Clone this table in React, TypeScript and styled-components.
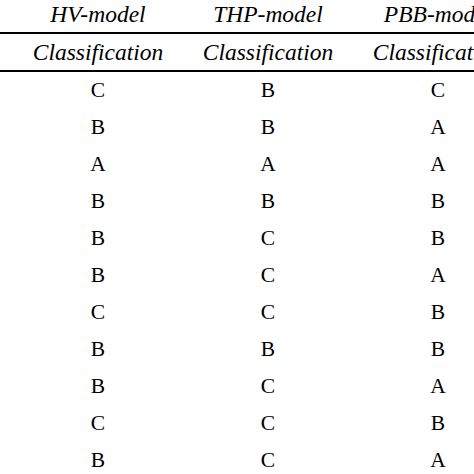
import React from 'react';
import styled, { createGlobalStyle } from 'styled-components';

const GlobalStyle = createGlobalStyle`
  html, body {
    margin: 0;
    padding: 0;
    background: #fff;
  }
  body {
    font-family: "Liberation Serif", "Times New Roman", serif;
    color: #000;
  }
`;

const Frame = styled.div`
  width: 474px;
  height: 474px;
  overflow: hidden;
`;

const Row = styled.div<{ $rule?: boolean; $h: number }>`
  display: grid;
  grid-template-columns: 13px repeat(3, 170px);
  width: 600px;
  height: ${({ $h }) => $h}px;
  box-sizing: border-box;
  border-bottom: ${({ $rule }) => ($rule ? '2px solid #000' : 'none')};
`;

const HeadCell = styled.div<{ $lh: number }>`
  font-style: italic;
  font-size: 23.5px;
  line-height: ${({ $lh }) => $lh}px;
  text-align: center;
  white-space: nowrap;
`;

const Cell = styled.div`
  font-size: 21.5px;
  line-height: 37px;
  text-align: center;
`;

const models = ['HV-model', 'THP-model', 'PBB-model'];

const rows = [
  ['C', 'B', 'C'],
  ['B', 'B', 'A'],
  ['A', 'A', 'A'],
  ['B', 'B', 'B'],
  ['B', 'C', 'B'],
  ['B', 'C', 'A'],
  ['C', 'C', 'B'],
  ['B', 'B', 'B'],
  ['B', 'C', 'A'],
  ['C', 'C', 'B'],
  ['B', 'C', 'A'],
];

export default function App() {
  return (
    <Frame>
      <GlobalStyle />
      <Row $rule $h={34}>
        <span />
        {models.map(m => (
          <HeadCell key={m} $lh={28}>
            {m}
          </HeadCell>
        ))}
      </Row>
      <Row $rule $h={38}>
        <span />
        {models.map(m => (
          <HeadCell key={m} $lh={36}>
            Classification
          </HeadCell>
        ))}
      </Row>
      {rows.map((r, i) => (
        <Row key={i} $h={37}>
          <span />
          {r.map((v, j) => (
            <Cell key={j}>{v}</Cell>
          ))}
        </Row>
      ))}
    </Frame>
  );
}
